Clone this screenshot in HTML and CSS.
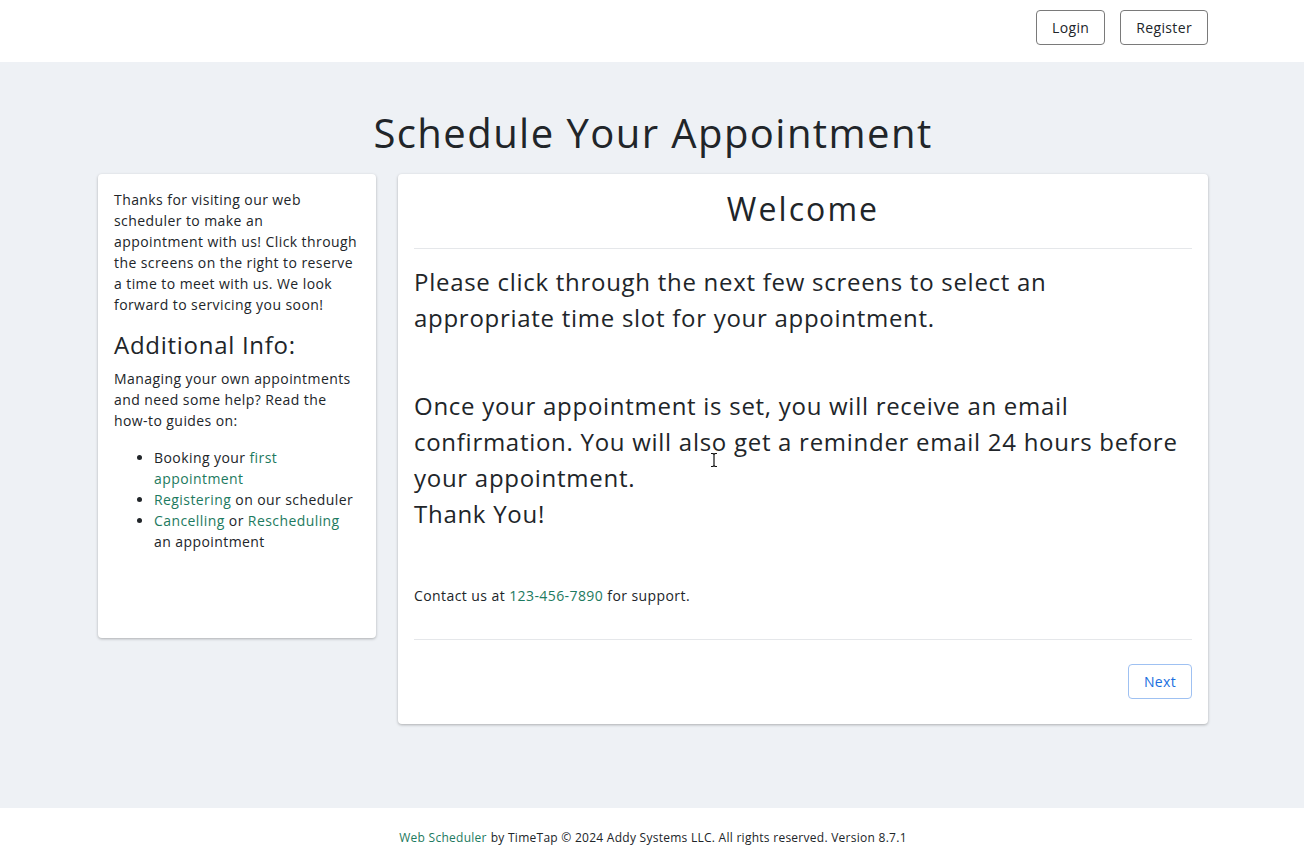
FILE: index.html
```html
<!DOCTYPE html>
<html lang="en">
<head>
<meta charset="utf-8">
<title>Schedule Your Appointment</title>
<link rel="stylesheet" href="styles.css">
</head>
<body>
<header class="topbar">
  <div class="topbar-inner">
    <button class="btn-outline">Login</button>
    <button class="btn-outline">Register</button>
  </div>
</header>
<main class="main">
  <h1 class="page-title">Schedule Your Appointment</h1>
  <div class="columns">
    <aside class="card side-card">
      <p class="side-text">Thanks for visiting our web<br>scheduler to make an<br>appointment with us! Click through<br>the screens on the right to reserve<br>a time to meet with us. We look<br>forward to servicing you soon!</p>
      <h2 class="side-heading">Additional Info:</h2>
      <p class="side-text">Managing your own appointments<br>and need some help? Read the<br>how-to guides on:</p>
      <ul class="side-list">
        <li>Booking your <a href="#">first<br>appointment</a></li>
        <li><a href="#">Registering</a> on our scheduler</li>
        <li><a href="#">Cancelling</a> or <a href="#">Rescheduling</a><br>an appointment</li>
      </ul>
    </aside>
    <section class="card main-card">
      <h2 class="welcome">Welcome</h2>
      <hr class="divider">
      <div class="message">
        <p class="msg-p">Please click through the next few screens to select an<br>appropriate time slot for your appointment.</p>
        <p class="msg-p msg-second">Once your appointment is set, you will receive an email<br>confirmation. You will also get a reminder email 24 hours before<br>your appointment.<br>Thank You!</p>
      </div>
      <p class="contact">Contact us at <a href="#">123-456-7890</a> for support.</p>
      <hr class="divider divider-bottom">
      <div class="actions">
        <button class="btn-next">Next</button>
      </div>
      <svg class="cursor" width="10" height="16" viewBox="0 0 10 16" aria-hidden="true"><path d="M2 1.5h2l1 1 1-1h2M5 2.5v11M2 14.5h2l1-1 1 1h2" fill="none" stroke="#111" stroke-width="1.2"/></svg>
    </section>
  </div>
</main>
<footer class="footer">
  <a href="#">Web Scheduler</a> by TimeTap © 2024 Addy Systems LLC. All rights reserved. Version 8.7.1
</footer>
</body>
</html>
```

FILE: styles.css
```css
* { box-sizing: border-box; }
html, body { margin: 0; padding: 0; }
body {
  font-family: "Open Sans", "Noto Sans", sans-serif;
  color: #212529;
  background: #eef1f5;
  min-height: 100vh;
  display: flex;
  flex-direction: column;
  font-size: 14px;
  line-height: 1.5;
  letter-spacing: 0.03em;
}
a { color: #1d7a60; text-decoration: none; }

.topbar {
  background: #ffffff;
  height: 62px;
}
.topbar-inner {
  width: 1110px;
  margin-left: calc(50% - 554px);
  display: flex;
  justify-content: flex-end;
  gap: 15px;
  padding-top: 10px;
}
.btn-outline {
  font-family: inherit;
  font-size: 14px;
  letter-spacing: 0.025em;
  color: #212529;
  background: #fff;
  border: 1px solid #7a7a7a;
  border-radius: 4px;
  height: 35px;
  padding: 0 15px;
  cursor: pointer;
}

.main {
  flex: 1;
  width: 1110px;
  margin-left: calc(50% - 554px);
}
.page-title {
  font-size: 40px;
  font-weight: 400;
  line-height: 48px;
  letter-spacing: 0.036em;
  text-align: center;
  margin: 47px 0 17px;
}
.columns {
  display: grid;
  grid-template-columns: 278px 810px;
  gap: 22px;
  align-items: start;
}
.card {
  background: #ffffff;
  border-radius: 4px;
  box-shadow: 0 1px 3px rgba(0,0,0,0.28);
}
.side-card {
  padding: 15px 16px 16px;
  min-height: 464px;
  white-space: nowrap;
}
.side-text { margin: 0; }
.side-heading {
  font-size: 24px;
  font-weight: 400;
  line-height: 29px;
  letter-spacing: 0.03em;
  margin: 15px 0 9px;
}
.side-list {
  margin: 16px 0 0;
  padding-left: 40px;
}

.main-card {
  position: relative;
  padding: 16px 16px 25px;
}
.welcome {
  font-size: 32px;
  font-weight: 400;
  line-height: 38px;
  letter-spacing: 0.065em;
  text-align: center;
  margin: 0 0 20px;
}
.divider {
  border: 0;
  border-top: 1px solid #e5e7ea;
  margin: 0;
}
.message {
  font-size: 24px;
  line-height: 36px;
  letter-spacing: 0.03em;
  margin-top: 15px;
  white-space: nowrap;
}
.msg-p { margin: 0; }
.msg-second { margin-top: 52px; }
.contact {
  margin: 53px 0 0;
}
.divider-bottom { margin-top: 33px; }
.actions {
  display: flex;
  justify-content: flex-end;
  margin-top: 24px;
}
.btn-next {
  font-family: inherit;
  font-size: 14px;
  letter-spacing: 0.025em;
  color: #1a6fe0;
  background: #fff;
  border: 1px solid #9fc1f2;
  border-radius: 4px;
  height: 35px;
  width: 64px;
  cursor: pointer;
}
.cursor {
  position: absolute;
  left: 311px;
  top: 278px;
}

.footer {
  background: #ffffff;
  height: 56px;
  display: flex;
  align-items: center;
  justify-content: center;
  font-size: 12px;
  letter-spacing: 0.022em;
  padding: 4px 0 0 2px;
  margin-top: 40px;
}
.footer a { margin-right: 4px; }
```
